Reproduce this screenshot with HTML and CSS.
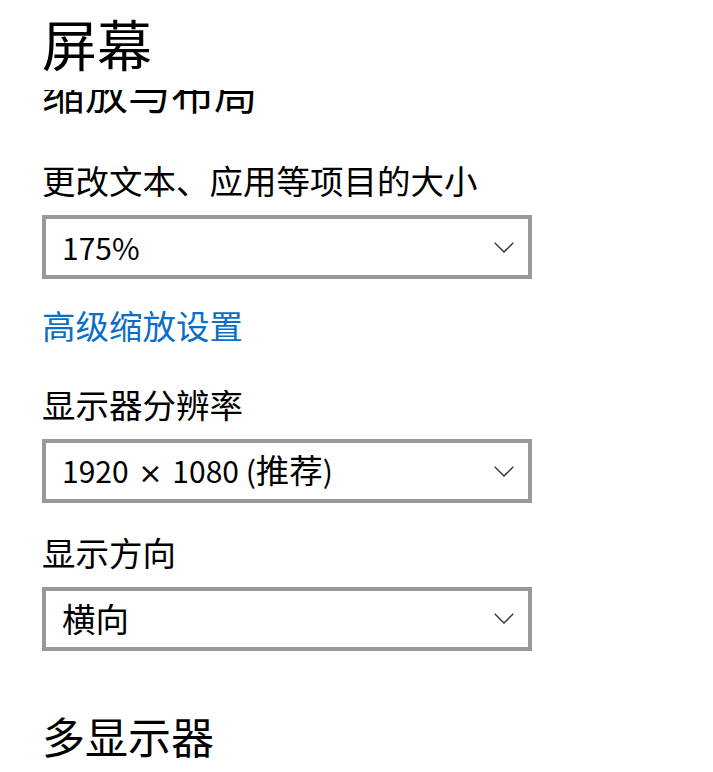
FILE: index.html
```html
<!DOCTYPE html>
<html lang="zh-CN">
<head>
<meta charset="utf-8">
<title>屏幕</title>
<link rel="stylesheet" href="styles.css">
</head>
<body>
<div class="window">
  <header class="page-header">
    <h1 class="page-title">屏幕</h1>
  </header>
  <main class="scroller">
    <div class="scroll-content">
      <h2 class="section-title section-first">缩放与布局</h2>

      <div class="field-label label-scale">更改文本、应用等项目的大小</div>
      <div class="combo">
        <span class="combo-value">175%</span>
        <svg class="chevron" width="20" height="11" viewBox="0 0 20 11" aria-hidden="true"><polyline points="0.7,0.7 10,10 19.3,0.7" fill="none" stroke="#333" stroke-width="1.3"/></svg>
      </div>

      <a class="link" href="#">高级缩放设置</a>

      <div class="field-label label-res">显示器分辨率</div>
      <div class="combo">
        <span class="combo-value">1920 <span class="times">×</span> 1080 (<span class="cjk">推荐</span>)</span>
        <svg class="chevron" width="20" height="11" viewBox="0 0 20 11" aria-hidden="true"><polyline points="0.7,0.7 10,10 19.3,0.7" fill="none" stroke="#333" stroke-width="1.3"/></svg>
      </div>

      <div class="field-label label-orient">显示方向</div>
      <div class="combo">
        <span class="combo-value"><span class="cjk">横向</span></span>
        <svg class="chevron" width="20" height="11" viewBox="0 0 20 11" aria-hidden="true"><polyline points="0.7,0.7 10,10 19.3,0.7" fill="none" stroke="#333" stroke-width="1.3"/></svg>
      </div>

      <h2 class="section-title section-multi">多显示器</h2>
    </div>
  </main>
</div>
</body>
</html>
```

FILE: styles.css
```css
html, body {
  margin: 0;
  padding: 0;
  background: #ffffff;
}

body {
  font-family: "Noto Sans CJK SC", "Noto Sans", sans-serif;
  color: #000000;
}

.window {
  width: 713px;
  height: 772px;
  display: flex;
  flex-direction: column;
  overflow: hidden;
  background: #ffffff;
}

.page-header {
  flex: 0 0 auto;
  padding: 0 0 5px 42px;
  background: #ffffff;
  position: relative;
  z-index: 1;
}

.page-title {
  margin: 0;
  font-size: 55px;
  font-weight: 400;
  line-height: 85px;
}

.scroller {
  flex: 1 1 auto;
  overflow: hidden;
}

.scroll-content {
  display: flex;
  flex-direction: column;
  align-items: flex-start;
  padding-left: 42px;
}

.section-title {
  margin: 0;
  font-size: 43px;
  font-weight: 400;
  line-height: 60px;
}

.section-first {
  margin-top: -29px;
}

.section-multi {
  margin-top: 54px;
}

.field-label {
  font-size: 33.5px;
  line-height: 44px;
}

.label-scale {
  margin-top: 37px;
}

.label-res {
  margin-top: 35.5px;
}

.label-orient {
  margin-top: 26.5px;
}

.combo {
  box-sizing: border-box;
  width: 490px;
  height: 64px;
  margin-top: 13px;
  border: 4px solid #999999;
  background: #ffffff;
  display: flex;
  align-items: center;
  justify-content: space-between;
  padding: 0 14px 0 16px;
}

.combo-value {
  font-size: 30px;
  line-height: 44px;
  white-space: pre;
}

.cjk {
  font-size: 33.5px;
}

.times {
  font-family: "DejaVu Sans", sans-serif;
  font-size: 29px;
  margin: 0 3px;
}

.chevron {
  display: block;
  flex: 0 0 auto;
}

.link {
  margin-top: 23.5px;
  font-size: 33.5px;
  line-height: 44px;
  color: #0b6fc5;
  text-decoration: none;
}
```
